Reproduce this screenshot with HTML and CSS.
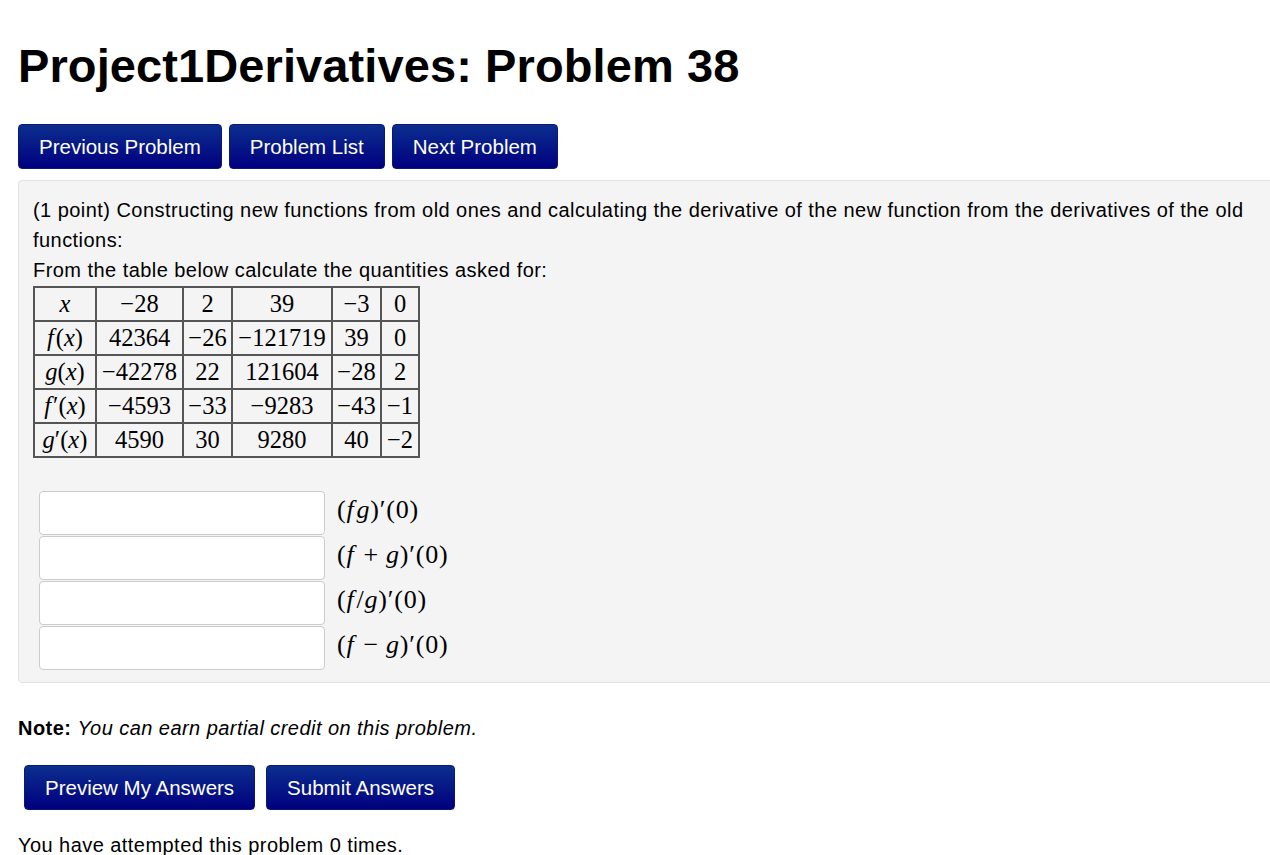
FILE: index.html
```html
<!DOCTYPE html>
<html lang="en">
<head>
  <meta charset="UTF-8">
  <title>Project1Derivatives: Problem 38</title>
  <link rel="stylesheet" href="styles.css">
</head>
<body>
  <h1 class="judul">Project1Derivatives: Problem 38</h1>
  <div class="nav">
    <a class="tombol" href="#">Previous Problem</a>
    <a class="tombol" href="#">Problem List</a>
    <a class="tombol" href="#">Next Problem</a>
  </div>

  <div class="problem">
    <p class="teks">(1 point) Constructing new functions from old ones and calculating the derivative of the new function from the derivatives of the old functions:</p>
    <p class="teks">From the table below calculate the quantities asked for:</p>
    <table class="tabel">
      <colgroup>
        <col class="c1"><col class="c2"><col class="c3"><col class="c4"><col class="c5"><col class="c6">
      </colgroup>
      <tr><td><i>x</i></td><td>−28</td><td>2</td><td>39</td><td>−3</td><td>0</td></tr>
      <tr><td><i class="fn">f</i>(<i>x</i>)</td><td>42364</td><td>−26</td><td>−121719</td><td>39</td><td>0</td></tr>
      <tr><td><i>g</i>(<i>x</i>)</td><td>−42278</td><td>22</td><td>121604</td><td>−28</td><td>2</td></tr>
      <tr><td><i class="fn">f</i>′(<i>x</i>)</td><td>−4593</td><td>−33</td><td>−9283</td><td>−43</td><td>−1</td></tr>
      <tr><td><i>g</i>′(<i>x</i>)</td><td>4590</td><td>30</td><td>9280</td><td>40</td><td>−2</td></tr>
    </table>

    <div class="jawaban">
      <div class="baris"><input class="isian" type="text"><span class="label">(<i class="fn">f</i><i>g</i>)′(0)</span></div>
      <div class="baris"><input class="isian" type="text"><span class="label">(<i class="fn">f</i><span class="op">+</span><i>g</i>)′(0)</span></div>
      <div class="baris"><input class="isian" type="text"><span class="label">(<i class="fn">f</i>/<i>g</i>)′(0)</span></div>
      <div class="baris"><input class="isian" type="text"><span class="label">(<i class="fn">f</i><span class="op">−</span><i>g</i>)′(0)</span></div>
    </div>
  </div>

  <p class="note"><b>Note:</b> <i>You can earn partial credit on this problem.</i></p>

  <div class="aksi">
    <a class="tombol" href="#">Preview My Answers</a>
    <a class="tombol" href="#">Submit Answers</a>
  </div>

  <p class="info">You have attempted this problem 0 times.</p>
</body>
</html>
```

FILE: styles.css
```css
body {
  margin: 0;
  padding: 0 0 0 18px;
  font-family: "Liberation Sans", Arial, sans-serif;
  font-size: 20px;
  letter-spacing: 0.45px;
  color: black;
  background: white;
  overflow: hidden;
}

.judul {
  margin: 0;
  padding-top: 38px;
  font-size: 47px;
  line-height: 56px;
  font-weight: bold;
  letter-spacing: 0.1px;
}

.nav {
  display: flex;
  gap: 7px;
  margin-top: 30px;
}

.tombol {
  display: inline-block;
  height: 45px;
  line-height: 44px;
  padding: 0 20px;
  box-sizing: border-box;
  border-radius: 4px;
  border: 1px solid #0a1a70;
  background: linear-gradient(#0c2e8e, #00007f);
  color: white;
  font-size: 20.5px;
  letter-spacing: 0;
  text-decoration: none;
}

.problem {
  margin-top: 11px;
  width: 1280px;
  box-sizing: border-box;
  padding: 14px 14px 12px 14px;
  background: #f4f4f4;
  border: 1px solid #e2e2e2;
  border-radius: 4px;
}

.teks {
  margin: 0;
  line-height: 30px;
}

.tabel {
  margin-top: 1px;
  border-collapse: collapse;
  font-family: "Liberation Serif", "DejaVu Serif", serif;
  font-size: 24.5px;
  letter-spacing: 0;
}

.tabel td {
  border: 2px solid #555;
  height: 32px;
  padding: 0;
  text-align: center;
  line-height: 32px;
}

.fn {
  margin-right: 2px;
}

.c1 { width: 62px; }
.c2 { width: 87px; }
.c3 { width: 49px; }
.c4 { width: 100px; }
.c5 { width: 49px; }
.c6 { width: 38px; }

.jawaban {
  margin-top: 32px;
  padding-left: 6px;
}

.baris {
  display: flex;
  align-items: center;
  height: 45px;
}

.isian {
  width: 286px;
  height: 44px;
  box-sizing: border-box;
  border: 1px solid #cccccc;
  border-radius: 4px;
  background: white;
  margin: 0;
}

.label {
  margin-left: 12px;
  font-family: "Liberation Serif", "DejaVu Serif", serif;
  font-size: 26px;
  letter-spacing: 0.8px;
  margin-top: -5px;
}

.op {
  margin: 0 7px;
}

.note {
  margin: 33px 0 0 0;
  line-height: 24px;
}

.aksi {
  display: flex;
  gap: 11px;
  margin-top: 25px;
  padding-left: 6px;
}

.info {
  margin: 23px 0 0 0;
  line-height: 24px;
}
```
